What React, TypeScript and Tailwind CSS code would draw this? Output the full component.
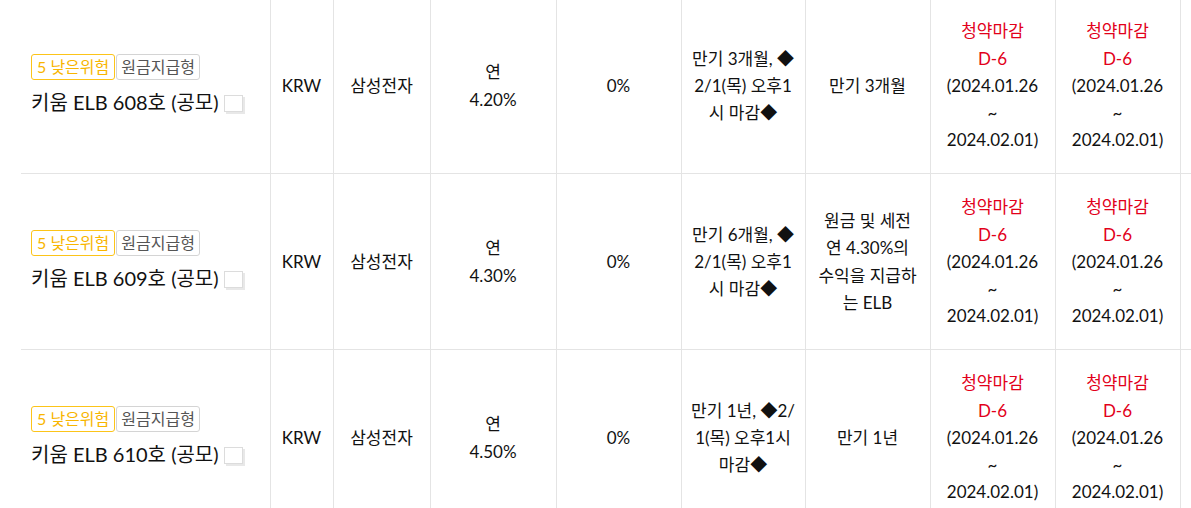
import React from "react";

type Row = {
  no: string;
  maturity: string[];
  summary: string[];
  rate: string;
};

const rows: Row[] = [
  {
    no: "608",
    maturity: ["만기 3개월, ◆", "2/1(목) 오후1", "시 마감◆"],
    summary: ["만기 3개월"],
    rate: "4.20%",
  },
  {
    no: "609",
    maturity: ["만기 6개월, ◆", "2/1(목) 오후1", "시 마감◆"],
    summary: ["원금 및 세전", "연 4.30%의", "수익을 지급하", "는 ELB"],
    rate: "4.30%",
  },
  {
    no: "610",
    maturity: ["만기 1년, ◆2/", "1(목) 오후1시", "마감◆"],
    summary: ["만기 1년"],
    rate: "4.50%",
  },
];

const cell = "border border-[#e4e4e4] px-[8px] text-center align-middle";

const Period = () => (
  <div className="flex flex-col items-center">
    <span className="text-[#e2001a]">청약마감</span>
    <span className="text-[#e2001a]">D-6</span>
    <span>(2024.01.26</span>
    <span>~</span>
    <span>2024.02.01)</span>
  </div>
);

const Lines = ({ lines }: { lines: string[] }) => (
  <div className="flex flex-col items-center">
    {lines.map((l) => (
      <span key={l} className="whitespace-nowrap">
        {l}
      </span>
    ))}
  </div>
);

export default function App() {
  return (
    <div
      className="h-[508px] w-[1191px] overflow-hidden bg-white pl-[21px] text-[17px] leading-[27.3px] text-[#111]"
      style={{ fontFamily: "Lato, 'Noto Sans CJK KR', sans-serif" }}
    >
      <table className="-mt-[3px] w-[1300px] table-fixed border-collapse">
        <colgroup>
          <col className="w-[249px]" />
          <col className="w-[63px]" />
          <col className="w-[97px]" />
          <col className="w-[126px]" />
          <col className="w-[125px]" />
          <col className="w-[124px]" />
          <col className="w-[125px]" />
          <col className="w-[125px]" />
          <col className="w-[125px]" />
          <col />
        </colgroup>
        <tbody>
          {rows.map((r) => (
            <tr key={r.no} className="h-[176px]">
              <td className="border-y border-r border-[#e4e4e4] pl-[10px] text-left align-middle">
                <div className="mt-[2px] flex gap-px">
                  <span className="rounded-[3px] border border-[#fcc419] px-[5px] text-[16px] leading-[24px] text-[#f8b500]">
                    5 낮은위험
                  </span>
                  <span className="rounded-[3px] border border-[#d4d4d4] px-[4px] text-[16px] leading-[24px] text-[#555]">
                    원금지급형
                  </span>
                </div>
                <div className="mt-[5px] flex items-center gap-[5px] text-[20px] leading-[34px]">
                  <span>키움 ELB {r.no}호 (공모)</span>
                  <span className="mt-[3px] inline-block h-[17px] w-[19px] border border-[#dcdcdc] bg-white shadow-[2px_2px_0_#e8e8e8]" />
                </div>
              </td>
              <td className={cell}>KRW</td>
              <td className={cell}>삼성전자</td>
              <td className={cell}>
                <Lines lines={["연", r.rate]} />
              </td>
              <td className={cell}>0%</td>
              <td className={cell}>
                <Lines lines={r.maturity} />
              </td>
              <td className={cell}>
                <Lines lines={r.summary} />
              </td>
              <td className={cell}>
                <Period />
              </td>
              <td className={cell}>
                <Period />
              </td>
              <td className={cell} />
            </tr>
          ))}
        </tbody>
      </table>
    </div>
  );
}
